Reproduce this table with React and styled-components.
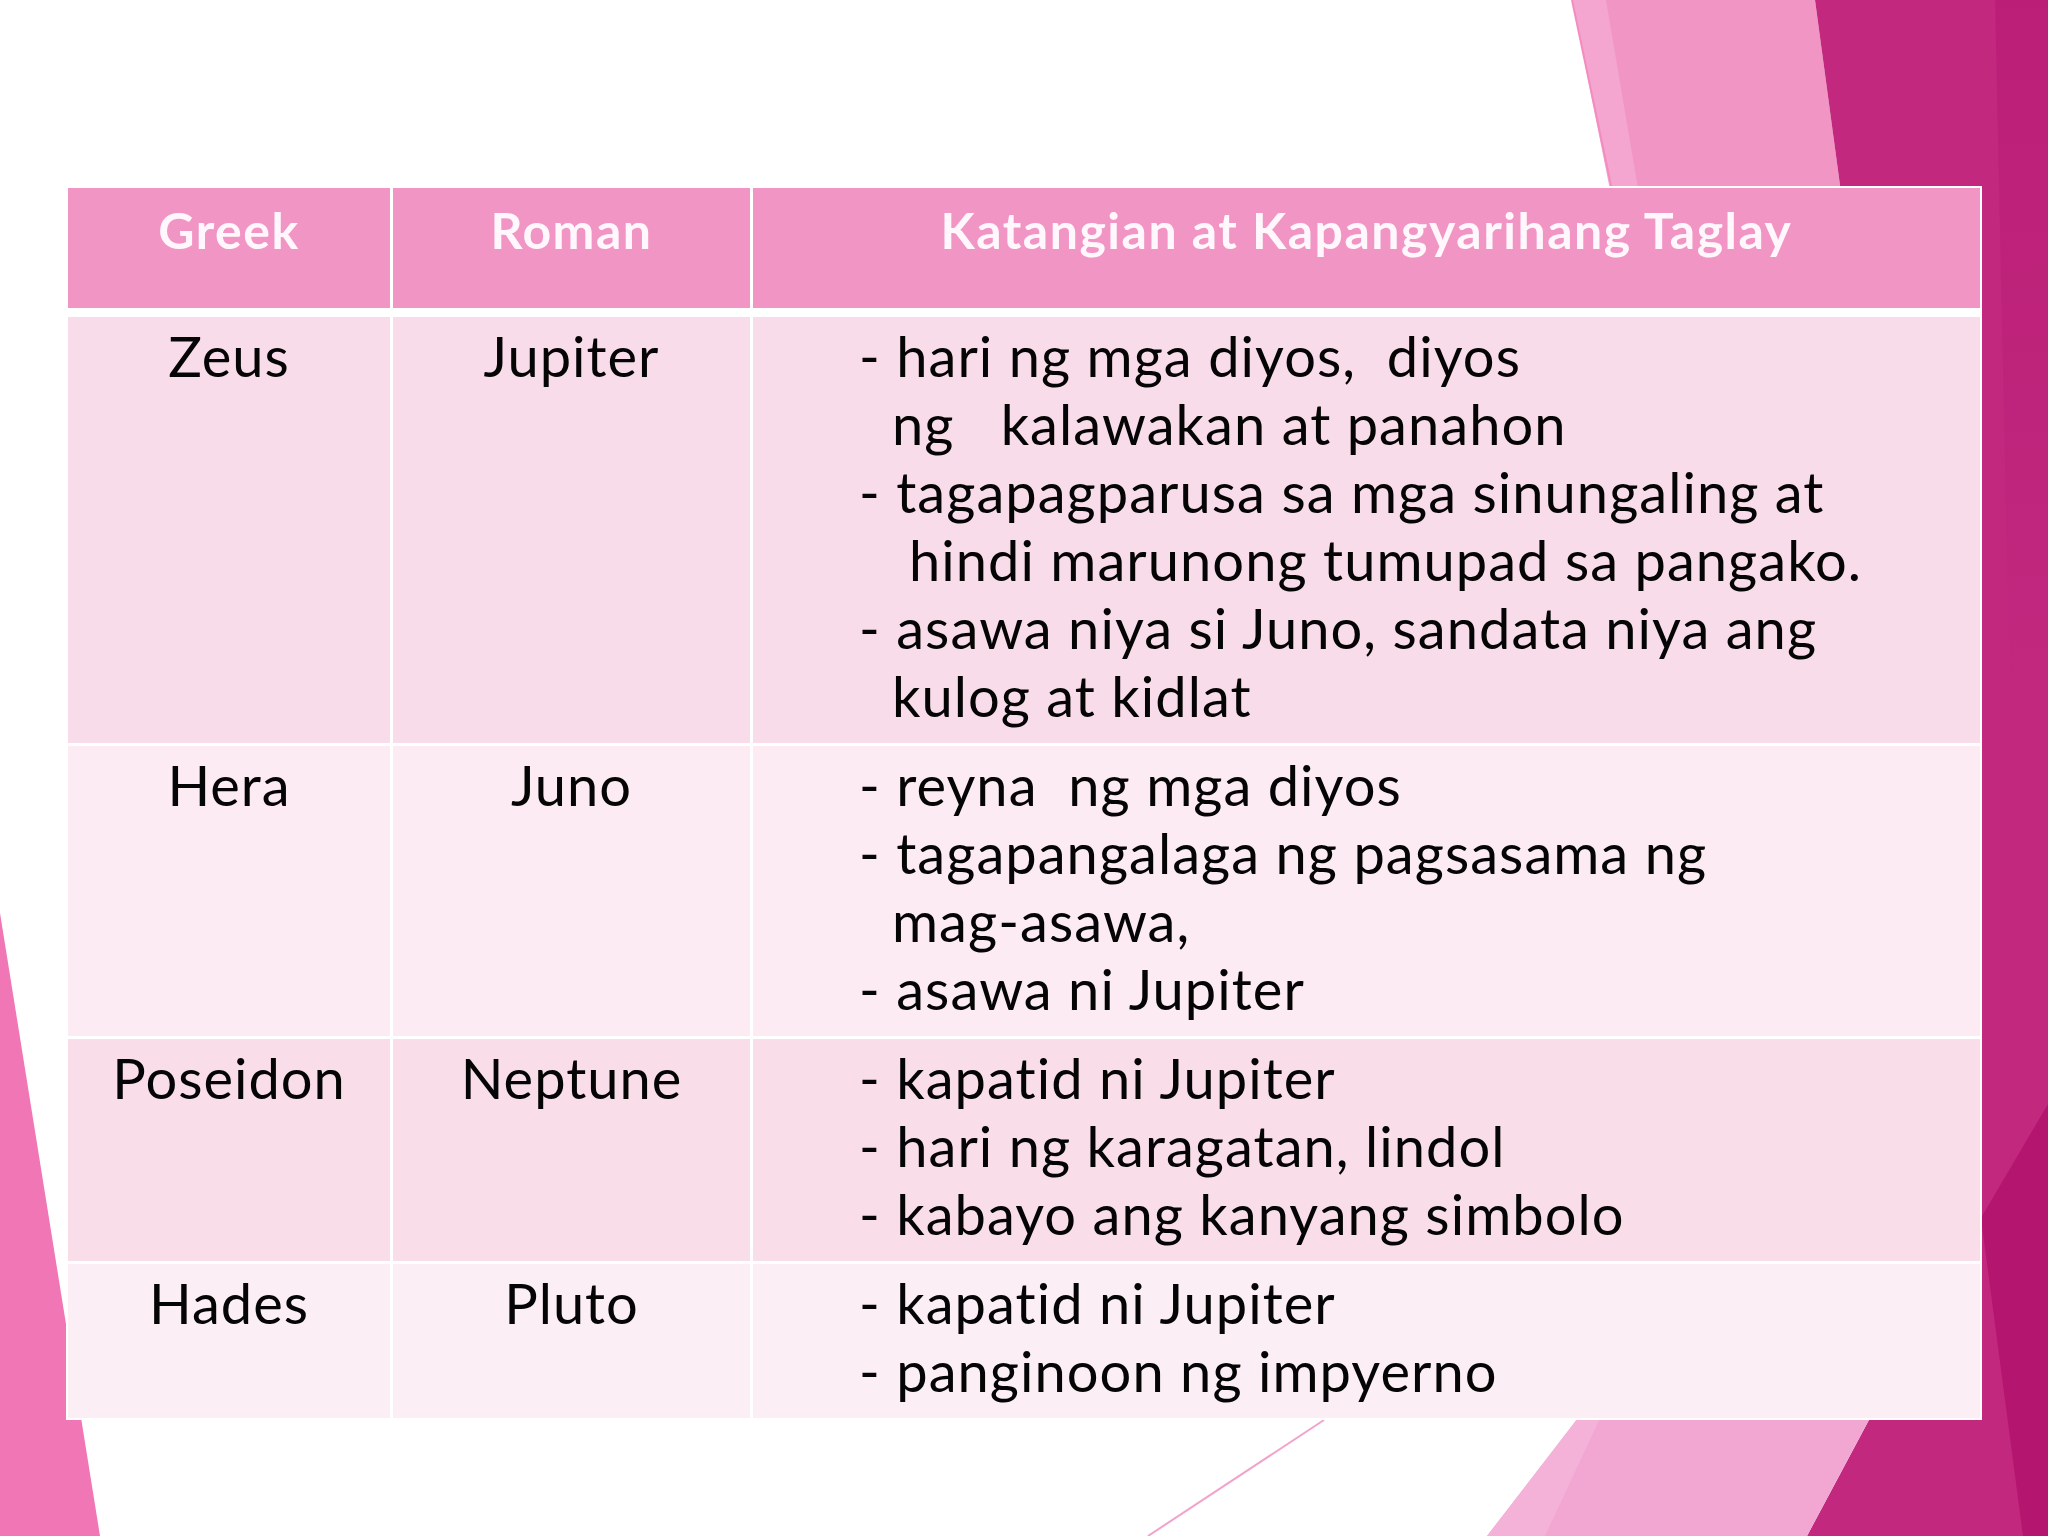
import React from "react";
import styled, { createGlobalStyle } from "styled-components";

const GlobalStyle = createGlobalStyle`
  html, body {
    margin: 0;
    padding: 0;
    background: #ffffff;
  }
`;

const Slide = styled.div`
  position: relative;
  width: 2048px;
  height: 1536px;
  overflow: hidden;
  background: #ffffff;
  font-family: Lato, "Open Sans", "Liberation Sans", sans-serif;
`;

const Backdrop = styled.svg`
  position: absolute;
  inset: 0;
  width: 2048px;
  height: 1536px;
  z-index: 0;
`;

const Table = styled.div`
  position: relative;
  z-index: 1;
  margin: 186px 0 0 66px;
  width: 1916px;
  box-sizing: border-box;
  border: 2px solid #ffffff;
  background: #ffffff;
  display: grid;
  grid-template-columns: 322px 357px 1fr;
  column-gap: 3px;
  row-gap: 3px;
`;

const HeadCell = styled.div`
  height: 120px;
  margin-bottom: 6px;
  background: #f195c5;
  color: #fff7fb;
  font-weight: 700;
  font-size: 50px;
  line-height: 60px;
  letter-spacing: 1.5px;
  text-align: center;
  padding-top: 12px;
  box-sizing: border-box;
`;

const NameCell = styled.div`
  background: ${(p) => p.$bg};
  color: #050505;
  font-size: 56px;
  line-height: 68px;
  letter-spacing: 1px;
  text-align: center;
  padding: 5px 0 13px;
`;

const InfoCell = styled.div`
  background: ${(p) => p.$bg};
  color: #050505;
  font-size: 56px;
  line-height: 68px;
  letter-spacing: 1.05px;
  padding: 5px 0 13px 106px;
`;

const Line = styled.div`
  white-space: pre;
  padding-left: ${(p) => p.$indent || 0}px;
`;

const rows = [
  {
    greek: "Zeus",
    roman: "Jupiter",
    bg: "#f9dce9",
    lines: [
      ["- hari ng mga diyos,  diyos", 0],
      ["ng   kalawakan at panahon", 33],
      ["- tagapagparusa sa mga sinungaling at", 0],
      ["hindi marunong tumupad sa pangako.", 50],
      ["- asawa niya si Juno, sandata niya ang", 0],
      ["kulog at kidlat", 33],
    ],
  },
  {
    greek: "Hera",
    roman: "Juno",
    bg: "#fcebf3",
    lines: [
      ["- reyna  ng mga diyos", 0],
      ["- tagapangalaga ng pagsasama ng", 0],
      ["mag-asawa,", 33],
      ["- asawa ni Jupiter", 0],
    ],
  },
  {
    greek: "Poseidon",
    roman: "Neptune",
    bg: "#f9dee9",
    lines: [
      ["- kapatid ni Jupiter", 0],
      ["- hari ng karagatan, lindol", 0],
      ["- kabayo ang kanyang simbolo", 0],
    ],
  },
  {
    greek: "Hades",
    roman: "Pluto",
    bg: "#fceef5",
    lines: [
      ["- kapatid ni Jupiter", 0],
      ["- panginoon ng impyerno", 0],
    ],
  },
];

const Shapes = () => (
  <Backdrop viewBox="0 0 2048 1536" aria-hidden="true">
    <defs>
      <linearGradient id="edgeShade" x1="0" y1="0" x2="0" y2="1">
        <stop offset="0" stopColor="#b91a74" stopOpacity="0.7" />
        <stop offset="1" stopColor="#b91a74" stopOpacity="0" />
      </linearGradient>
    </defs>
    {/* top right */}
    <polygon points="1575,0 1815,0 1842,200 1614,200" fill="#f195c5" />
    <polygon points="1572,0 1606,0 1640,200 1612,200" fill="#f4a5d0" />
    <line x1="1572" y1="0" x2="1612" y2="190" stroke="#f48cc0" strokeWidth="2" />
    <polygon
      points="1815,0 2048,0 2048,1536 1807,1536 1870,1418 1880,700 1842,200"
      fill="#c1287e"
    />
    <polygon points="1995,0 2048,0 2048,700 2010,700" fill="url(#edgeShade)" />
    <polygon points="1981,1218 2048,1104 2048,1536 2023,1536" fill="#b4156e" />
    {/* bottom right */}
    <polygon points="1487,1536 1578,1418 1870,1418 1807,1536" fill="#f2a7d3" />
    <polygon points="1487,1536 1578,1418 1600,1418 1545,1536" fill="#f5b2d8" />
    <line x1="1148" y1="1536" x2="1324" y2="1420" stroke="#f2a2cc" strokeWidth="2" />
    {/* left */}
    <polygon points="0,913 100,1536 0,1536" fill="#f076b6" />
  </Backdrop>
);

export default function App() {
  return (
    <>
      <GlobalStyle />
      <Slide>
        <Shapes />
        <Table>
          <HeadCell>Greek</HeadCell>
          <HeadCell>Roman</HeadCell>
          <HeadCell>Katangian at Kapangyarihang Taglay</HeadCell>
          {rows.map((r) => (
            <React.Fragment key={r.greek}>
              <NameCell $bg={r.bg}>{r.greek}</NameCell>
              <NameCell $bg={r.bg}>{r.roman}</NameCell>
              <InfoCell $bg={r.bg}>
                {r.lines.map(([text, indent], i) => (
                  <Line key={i} $indent={indent}>
                    {text}
                  </Line>
                ))}
              </InfoCell>
            </React.Fragment>
          ))}
        </Table>
      </Slide>
    </>
  );
}
